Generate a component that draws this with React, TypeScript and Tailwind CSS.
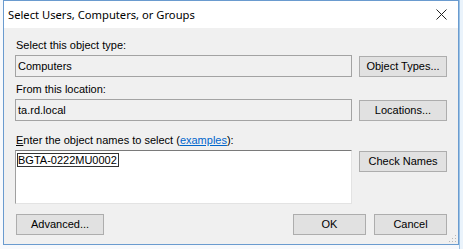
import React from "react";

const ui = { fontFamily: '"Liberation Sans", Arial, sans-serif' };

function Btn({ label, className = "" }: { label: string; className?: string }) {
  return (
    <div
      className={`flex h-[21px] items-center justify-center border border-[#adadad] bg-[#e1e1e1] text-[11px] leading-[13px] text-black ${className}`}
    >
      {label}
    </div>
  );
}

function Field({ value }: { value: string }) {
  return (
    <div className="flex h-[22px] flex-1 items-center border border-[#a3a3a3] bg-[#f0f0f0] pl-[2px] text-[11px] leading-[13px] text-black">
      {value}
    </div>
  );
}

export default function App() {
  return (
    <div className="flex h-[249px] w-[463px] overflow-hidden bg-[#f7f9fc] pl-[3px]" style={ui}>
      <div className="flex h-[245px] w-[456px] shrink-0 flex-col border border-[#6a9bcf] bg-[#f0f0f0]">
        {/* Title bar */}
        <div className="flex h-[27px] items-center justify-between bg-white pl-[4px] pr-[11px]">
          <span
            className="text-[11.2px] leading-[16px] text-black"
            style={{ fontFamily: '"Noto Sans", "Open Sans", sans-serif' }}
          >
            Select Users, Computers, or Groups
          </span>
          <svg width="11" height="11" viewBox="0 0 11 11" className="mb-[1px]">
            <path d="M0.5 0.5 L10.5 10.5 M10.5 0.5 L0.5 10.5" stroke="#222" strokeWidth="1" fill="none" />
          </svg>
        </div>

        {/* Body */}
        <div className="relative flex flex-1 flex-col px-[11px] pt-[11px]">
          <div className="pl-[1px] text-[11px] leading-[13px] text-black">Select this object type:</div>
          <div className="mt-[3px] flex items-center gap-[7px]">
            <Field value="Computers" />
            <Btn label="Object Types..." className="w-[88px]" />
          </div>

          <div className="mt-[6px] pl-[1px] text-[11px] leading-[13px] text-black">From this location:</div>
          <div className="mt-[3px] flex items-center gap-[7px]">
            <Field value="ta.rd.local" />
            <Btn label="Locations..." className="w-[88px]" />
          </div>

          <div className="mt-[13px] pl-[1px] text-[11px] leading-[13px] text-black">
            <span className="underline">E</span>nter the object names to select (
            <span className="text-[#0066cc] underline">examples</span>):
          </div>
          <div className="mt-[3px] flex items-start gap-[7px]">
            <div className="h-[54px] flex-1 border border-b-[#e3e3e3] border-l-[#a0a0a0] border-r-[#e3e3e3] border-t-[#7a7a7a] bg-white pl-[1px] pt-[2px] text-[11px] leading-[13px] text-black">
              <span className="inline-block border border-[#333] pr-[1px] leading-[12px]">BGTA-0222MU0002</span>
            </div>
            <Btn label="Check Names" className="mt-[1px] w-[88px]" />
          </div>

          <div className="mt-[10px] flex items-center">
            <Btn label="Advanced..." className="ml-[1px] w-[88px]" />
            <div className="flex-1" />
            <Btn label="OK" className="w-[73px]" />
            <Btn label="Cancel" className="ml-[8px] w-[73px]" />
          </div>

          {/* resize grip */}
          <svg width="8" height="8" viewBox="0 0 8 8" className="absolute bottom-[1px] right-[1px]">
            <rect x="6" y="0" width="1" height="1" fill="#b8b8b8" />
            <rect x="3" y="3" width="1" height="1" fill="#b8b8b8" />
            <rect x="6" y="3" width="1" height="1" fill="#b8b8b8" />
            <rect x="0" y="6" width="1" height="1" fill="#b8b8b8" />
            <rect x="3" y="6" width="1" height="1" fill="#b8b8b8" />
            <rect x="6" y="6" width="1" height="1" fill="#b8b8b8" />
          </svg>
        </div>
      </div>
      {/* strip of the window behind */}
      <div className="flex-1 border-l border-[#9cc3e6] bg-[#eaf3fb]" />
    </div>
  );
}
